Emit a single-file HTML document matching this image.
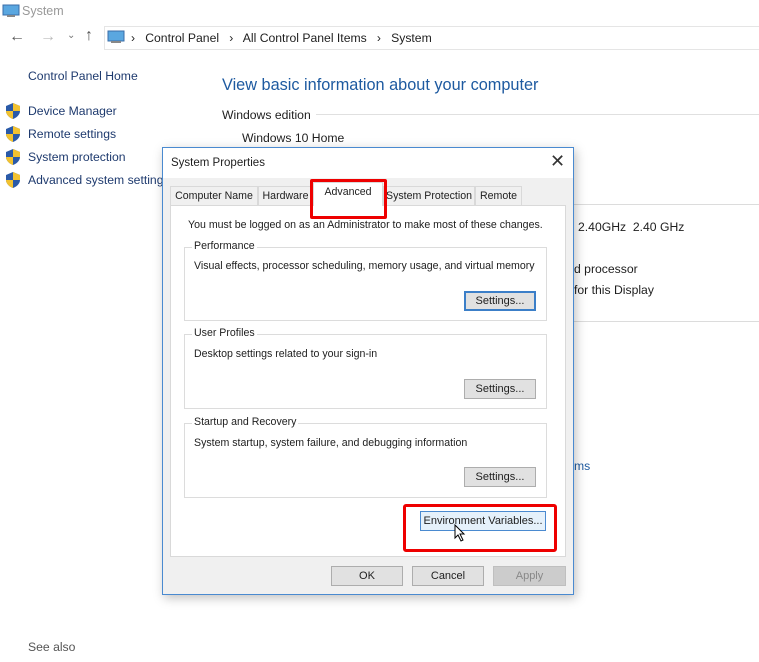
<!DOCTYPE html><html><head><style>
body{margin:0;width:759px;height:662px;background:#fff;font-family:"Liberation Sans",sans-serif;position:relative;overflow:hidden;color:#1e1e1e}
div,span{white-space:nowrap}
.a{position:absolute}
.s{font-size:12.2px}
.lnk{font-size:12.2px;color:#1e3a6e}
.d{font-size:10.6px}
.btn{position:absolute;background:#e1e1e1;border:1px solid #adadad;font-size:11px;text-align:center;box-sizing:border-box;line-height:18px}
.grp{position:absolute;border:1px solid #dcdcdc;box-sizing:border-box}
.gl{position:absolute;top:-8px;left:7px;background:#fff;padding:0 2px;font-size:10.6px}
.tab{position:absolute;top:186px;height:20px;background:#f0f0f0;border:1px solid #d9d9d9;font-size:10.6px;line-height:19px;text-align:center;box-sizing:border-box}
.sh{position:absolute;left:6px;width:14px;height:16px}
</style></head><body>
<svg class="a" style="left:2px;top:4px" width="18" height="14"><rect x="1" y="1" width="16" height="10" fill="#5aa7e0" stroke="#3a6ea8"/><rect x="5" y="11" width="8" height="2" fill="#888"/></svg>
<div class="a" style="left:22px;top:4px;font-size:12.5px;color:#999">System</div>
<div class="a" style="left:9px;top:28px;font-size:16px;color:#555">←</div>
<div class="a" style="left:40px;top:28px;font-size:16px;color:#bbb">→</div>
<div class="a" style="left:67px;top:30px;font-size:10px;color:#777">⌄</div>
<div class="a" style="left:85px;top:27px;font-size:16px;color:#555">↑</div>
<div class="a" style="left:104px;top:26px;width:660px;height:22px;border:1px solid #e5e5e5;border-right:none"></div>
<svg class="a" style="left:107px;top:30px" width="18" height="14"><rect x="1" y="1" width="16" height="10" fill="#5aa7e0" stroke="#3a6ea8"/><rect x="4" y="11" width="10" height="2" fill="#888"/></svg>
<div class="a s" style="left:131px;top:31px">›&nbsp;&nbsp; Control Panel &nbsp;&nbsp;›&nbsp;&nbsp; All Control Panel Items &nbsp;&nbsp;›&nbsp;&nbsp; System</div>
<div class="a lnk" style="left:28px;top:69px">Control Panel Home</div>
<svg class="sh" style="top:103px" viewBox="0 0 14 16"><path d="M7 0L14 3V8C14 12 10 15 7 16C4 15 0 12 0 8V3Z" fill="#2a5aa8"/><path d="M7 0V8H14V3Z M0 8H7V16C4 15 0 12 0 8Z" fill="#f2c230"/></svg>
<svg class="sh" style="top:126px" viewBox="0 0 14 16"><path d="M7 0L14 3V8C14 12 10 15 7 16C4 15 0 12 0 8V3Z" fill="#2a5aa8"/><path d="M7 0V8H14V3Z M0 8H7V16C4 15 0 12 0 8Z" fill="#f2c230"/></svg>
<svg class="sh" style="top:149px" viewBox="0 0 14 16"><path d="M7 0L14 3V8C14 12 10 15 7 16C4 15 0 12 0 8V3Z" fill="#2a5aa8"/><path d="M7 0V8H14V3Z M0 8H7V16C4 15 0 12 0 8Z" fill="#f2c230"/></svg>
<svg class="sh" style="top:172px" viewBox="0 0 14 16"><path d="M7 0L14 3V8C14 12 10 15 7 16C4 15 0 12 0 8V3Z" fill="#2a5aa8"/><path d="M7 0V8H14V3Z M0 8H7V16C4 15 0 12 0 8Z" fill="#f2c230"/></svg>
<div class="a lnk" style="left:28px;top:104px">Device Manager</div>
<div class="a lnk" style="left:28px;top:127px">Remote settings</div>
<div class="a lnk" style="left:28px;top:150px">System protection</div>
<div class="a lnk" style="left:28px;top:173px">Advanced system settings</div>
<div class="a" style="left:222px;top:76px;font-size:16.3px;color:#1e5aa0">View basic information about your computer</div>
<div class="a s" style="left:222px;top:108px">Windows edition</div>
<div class="a" style="left:316px;top:114px;width:443px;height:1px;background:#e0e0e0"></div>
<div class="a s" style="left:242px;top:131px">Windows 10 Home</div>
<div class="a" style="left:574px;top:204px;width:185px;height:1px;background:#dcdcdc"></div>
<div class="a" style="left:574px;top:321px;width:185px;height:1px;background:#dcdcdc"></div>
<div class="a s" style="left:578px;top:220px">2.40GHz &nbsp;2.40 GHz</div>
<div class="a s" style="left:574px;top:262px">d processor</div>
<div class="a s" style="left:574px;top:283px">for this Display</div>
<div class="a s" style="left:574px;top:459px;color:#1e5aa0">ms</div>
<div class="a s" style="left:28px;top:640px;color:#555">See also</div>

<div class="a" style="left:162px;top:147px;width:410px;height:446px;background:#f0f0f0;border:1px solid #4a8ad0;box-shadow:2px 3px 10px rgba(0,0,0,.25)"></div>
<div class="a" style="left:163px;top:148px;width:410px;height:30px;background:#fff"></div>
<div class="a" style="left:171px;top:157px;font-size:11.5px">System Properties</div>
<div class="a" style="left:550px;top:151px;font-size:18px;color:#333">✕</div>
<div class="a" style="left:170px;top:205px;width:396px;height:352px;background:#fff;border:1px solid #d9d9d9;box-sizing:border-box"></div>
<div class="tab" style="left:170px;width:88px">Computer Name</div>
<div class="tab" style="left:258px;width:55px">Hardware</div>
<div class="tab" style="left:383px;width:92px">System Protection</div>
<div class="tab" style="left:475px;width:47px">Remote</div>
<div class="tab" style="left:313px;top:182px;height:24px;width:70px;background:#fff;border-bottom:none">Advanced</div>
<div class="a" style="left:310px;top:179px;width:71px;height:34px;border:3px solid #e00;border-radius:2px"></div>
<div class="a d" style="left:188px;top:219px">You must be logged on as an Administrator to make most of these changes.</div>
<div class="grp" style="left:184px;top:247px;width:363px;height:74px"><span class="gl">Performance</span></div>
<div class="a d" style="left:194px;top:260px">Visual effects, processor scheduling, memory usage, and virtual memory</div>
<div class="btn" style="left:464px;top:291px;width:72px;height:20px;border:2px solid #3c7fc8;line-height:16px">Settings...</div>
<div class="grp" style="left:184px;top:334px;width:363px;height:75px"><span class="gl">User Profiles</span></div>
<div class="a d" style="left:194px;top:348px">Desktop settings related to your sign-in</div>
<div class="btn" style="left:464px;top:379px;width:72px;height:20px">Settings...</div>
<div class="grp" style="left:184px;top:423px;width:363px;height:75px"><span class="gl">Startup and Recovery</span></div>
<div class="a d" style="left:194px;top:437px">System startup, system failure, and debugging information</div>
<div class="btn" style="left:464px;top:467px;width:72px;height:20px">Settings...</div>
<div class="btn" style="left:420px;top:511px;width:126px;height:20px;background:#e5f1fb;border-color:#4a8ad0">Environment Variables...</div>
<div class="a" style="left:403px;top:504px;width:148px;height:42px;border:3px solid #e00;border-radius:3px"></div>
<svg class="a" style="left:454px;top:524px" width="12" height="18" viewBox="0 0 12 18"><path d="M1 1V14L4 11L7 17L9 16L6 10H10Z" fill="#fff" stroke="#000"/></svg>
<div class="btn" style="left:331px;top:566px;width:72px;height:20px">OK</div>
<div class="btn" style="left:412px;top:566px;width:72px;height:20px">Cancel</div>
<div class="btn" style="left:493px;top:566px;width:73px;height:20px;background:#ccc;border-color:#bfbfbf;color:#888">Apply</div>
</body></html>
